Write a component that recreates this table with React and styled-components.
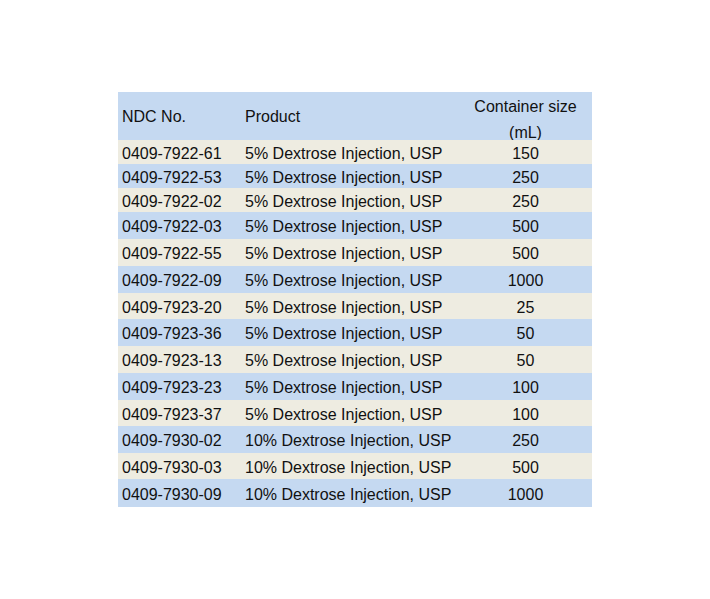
import styled, { createGlobalStyle } from 'styled-components';

const GlobalStyle = createGlobalStyle`
  body {
    margin: 0;
    background: #ffffff;
    font-family: "Liberation Sans", Arial, sans-serif;
  }
`;

const rows = [
  ['0409-7922-61', '5% Dextrose Injection, USP', '150', 24],
  ['0409-7922-53', '5% Dextrose Injection, USP', '250', 24],
  ['0409-7922-02', '5% Dextrose Injection, USP', '250', 24],
  ['0409-7922-03', '5% Dextrose Injection, USP', '500', 27],
  ['0409-7922-55', '5% Dextrose Injection, USP', '500', 27],
  ['0409-7922-09', '5% Dextrose Injection, USP', '1000', 27],
  ['0409-7923-20', '5% Dextrose Injection, USP', '25', 26],
  ['0409-7923-36', '5% Dextrose Injection, USP', '50', 27],
  ['0409-7923-13', '5% Dextrose Injection, USP', '50', 27],
  ['0409-7923-23', '5% Dextrose Injection, USP', '100', 27],
  ['0409-7923-37', '5% Dextrose Injection, USP', '100', 26],
  ['0409-7930-02', '10% Dextrose Injection, USP', '250', 27],
  ['0409-7930-03', '10% Dextrose Injection, USP', '500', 26],
  ['0409-7930-09', '10% Dextrose Injection, USP', '1000', 28],
];

function App() {
  return (
    <Page>
      <GlobalStyle />
      <Table>
        <HeaderRow>
          <HeadCell>NDC No.</HeadCell>
          <HeadCell>Product</HeadCell>
          <HeadSize>
            <span>Container size</span>
            <span>(mL)</span>
          </HeadSize>
        </HeaderRow>
        {rows.map(([ndc, product, size, h], i) => (
          <Row key={ndc} $alt={i % 2 === 1} $h={h}>
            <Cell>{ndc}</Cell>
            <Cell>{product}</Cell>
            <NumCell>{size}</NumCell>
          </Row>
        ))}
      </Table>
    </Page>
  );
}

const Page = styled.div`
  padding: 92px 0 0 118px;
  width: 710px;
  height: 599px;
  box-sizing: border-box;
`;

const Table = styled.div`
  width: 474px;
  display: flex;
  flex-direction: column;
  color: #111111;
  font-size: 16px;
`;

const HeaderRow = styled.div`
  display: grid;
  grid-template-columns: 123px 218px 133px;
  height: 48px;
  align-items: center;
  background: #c5d9f1;
`;

const Row = styled.div`
  display: grid;
  grid-template-columns: 123px 218px 133px;
  height: ${(p) => p.$h}px;
  align-items: center;
  background: ${(p) => (p.$alt ? '#c5d9f1' : '#eeece1')};
`;

const Cell = styled.div`
  padding: 3px 0 0 4px;
  white-space: nowrap;
`;

const HeadCell = styled.div`
  padding: 0 0 4px 4px;
  white-space: nowrap;
`;

const NumCell = styled.div`
  text-align: center;
  padding-top: 3px;
`;

const HeadSize = styled.div`
  display: flex;
  flex-direction: column;
  align-items: center;
  line-height: 26px;
  padding-top: 2px;
`;

export default App;
